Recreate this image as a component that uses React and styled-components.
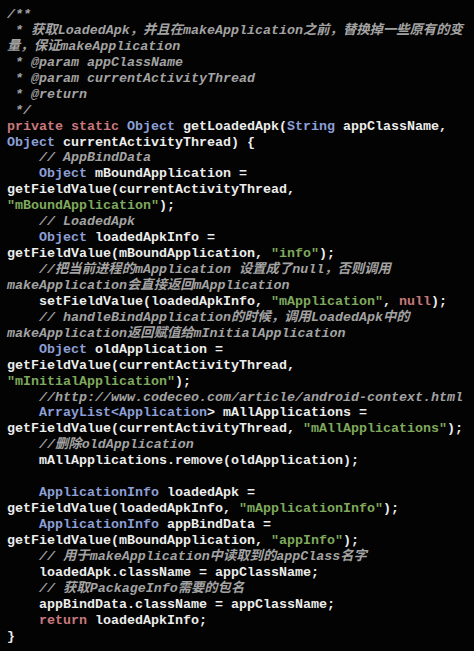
import React from "react";
import styled, { createGlobalStyle } from "styled-components";

const Global = createGlobalStyle`
  html, body {
    margin: 0;
    padding: 0;
    background: #030303;
  }
  #root {
    min-height: 651px;
    background: #030303;
  }
`;

const CodeBlock = styled.pre`
  margin: 0;
  padding: 7px 0 8px 7px;
  font-family: "Liberation Mono", "Noto Sans CJK SC", monospace;
  font-size: 13.33px;
  line-height: 15.95px;
  color: #ececec;
  background: #030303;
  white-space: pre;
  overflow: hidden;
`;

const Line = styled.div`
  height: 15.95px;
`;

const colors = {
  code: "#ededed",
  comment: "#a2a2a2",
  keyword: "#c8787c",
  type: "#8c9fd6",
  string: "#7fa95d",
};

const Token = styled.span`
  color: ${(p) => colors[p.$kind] || colors.code};
  font-weight: 700;
  font-style: ${(p) => (p.$kind === "comment" ? "italic" : "normal")};
`;

const C = (t) => ["comment", t];
const K = (t) => ["keyword", t];
const T = (t) => ["type", t];
const S = (t) => ["string", t];
const P = (t) => ["code", t];

const lines = [
  [C("/**")],
  [C(" * 获取LoadedApk，并且在makeApplication之前，替换掉一些原有的变")],
  [C("量，保证makeApplication")],
  [C(" * @param appClassName")],
  [C(" * @param currentActivityThread")],
  [C(" * @return")],
  [C(" */")],
  [K("private static "), T("Object"), P(" getLoadedApk("), T("String"), P(" appClassName,")],
  [T("Object"), P(" currentActivityThread) {")],
  [P("    "), C("// AppBindData")],
  [P("    "), T("Object"), P(" mBoundApplication =")],
  [P("getFieldValue(currentActivityThread,")],
  [S("\"mBoundApplication\""), P(");")],
  [P("    "), C("// LoadedApk")],
  [P("    "), T("Object"), P(" loadedApkInfo =")],
  [P("getFieldValue(mBoundApplication, "), S("\"info\""), P(");")],
  [P("    "), C("//把当前进程的mApplication 设置成了null，否则调用")],
  [C("makeApplication会直接返回mApplication")],
  [P("    setFieldValue(loadedApkInfo, "), S("\"mApplication\""), P(", "), K("null"), P(");")],
  [P("    "), C("// handleBindApplication的时候，调用LoadedApk中的")],
  [C("makeApplication返回赋值给mInitialApplication")],
  [P("    "), T("Object"), P(" oldApplication =")],
  [P("getFieldValue(currentActivityThread,")],
  [S("\"mInitialApplication\""), P(");")],
  [P("    "), C("//http://www.codeceo.com/article/android-context.html")],
  [P("    "), T("ArrayList<Application"), P("> mAllApplications =")],
  [P("getFieldValue(currentActivityThread, "), S("\"mAllApplications\""), P(");")],
  [P("    "), C("//删除oldApplication")],
  [P("    mAllApplications.remove(oldApplication);")],
  [P(" ")],
  [P("    "), T("ApplicationInfo"), P(" loadedApk =")],
  [P("getFieldValue(loadedApkInfo, "), S("\"mApplicationInfo\""), P(");")],
  [P("    "), T("ApplicationInfo"), P(" appBindData =")],
  [P("getFieldValue(mBoundApplication, "), S("\"appInfo\""), P(");")],
  [P("    "), C("// 用于makeApplication中读取到的appClass名字")],
  [P("    loadedApk.className = appClassName;")],
  [P("    "), C("// 获取PackageInfo需要的包名")],
  [P("    appBindData.className = appClassName;")],
  [P("    "), K("return"), P(" loadedApkInfo;")],
  [P("}")],
];

export default function App() {
  return (
    <>
      <Global />
      <CodeBlock>
        {lines.map((tokens, i) => (
          <Line key={i}>
            {tokens.map(([kind, text], j) => (
              <Token key={j} $kind={kind}>
                {text}
              </Token>
            ))}
          </Line>
        ))}
      </CodeBlock>
    </>
  );
}
